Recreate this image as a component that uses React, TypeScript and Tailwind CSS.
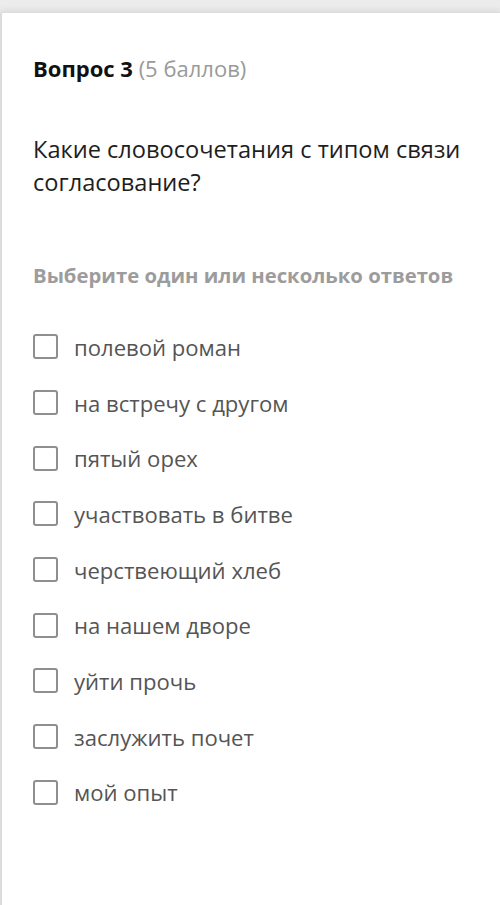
import React from "react";

const options = [
  "полевой роман",
  "на встречу с другом",
  "пятый орех",
  "участвовать в битве",
  "черствеющий хлеб",
  "на нашем дворе",
  "уйти прочь",
  "заслужить почет",
  "мой опыт",
];

export default function App() {
  return (
    <div
      className="h-[905px] w-[500px] overflow-hidden bg-[#ececec] pt-[12px]"
      style={{ fontFamily: '"Open Sans", "Noto Sans", sans-serif' }}
    >
      <div className="h-full rounded-tl-[3px] border-l-2 border-t border-[#dcdcdc] bg-white pl-[31px] pt-[40px] shadow-[0_-2px_6px_rgba(0,0,0,0.08)]">
        {/* Header */}
        <h2 className="text-[22px] leading-[30px] text-[#111]">
          <span className="font-bold">Вопрос 3</span>{" "}
          <span className="text-[#9a9a9a]">(5 баллов)</span>
        </h2>

        {/* Question */}
        <p className="mt-[50px] text-[23.6px] leading-[33px] text-[#1e1e1e]">
          Какие словосочетания с типом связи согласование?
        </p>

        {/* Hint */}
        <p className="mt-[62px] text-[20.3px] font-bold leading-[28px] text-[#9c9c9c]">
          Выберите один или несколько ответов
        </p>

        {/* Answers */}
        <ul className="mt-[30px] flex flex-col">
          {options.map((o) => (
            <li key={o} className="flex h-[55.7px] items-center gap-[16px]">
              <span className="h-[25px] w-[25px] shrink-0 rounded-[3px] border-2 border-[#8f8f8f]" />
              <span className="text-[22.1px] leading-[28px] text-[#555]">{o}</span>
            </li>
          ))}
        </ul>
      </div>
    </div>
  );
}
